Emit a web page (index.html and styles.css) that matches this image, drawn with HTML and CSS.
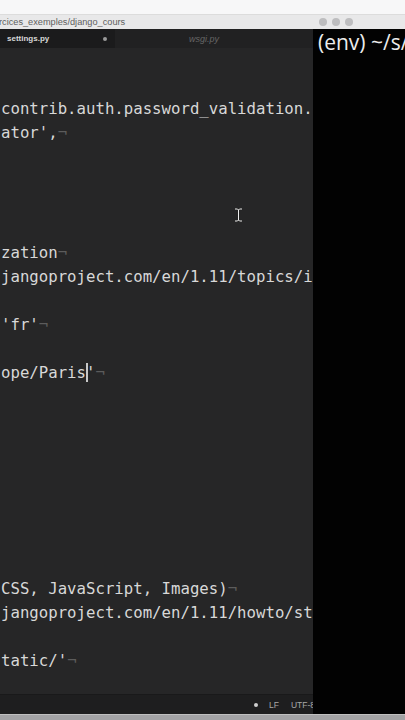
FILE: index.html
```html
<!DOCTYPE html>
<html lang="fr">
<head>
    <meta charset="UTF-8">
    <meta name="viewport" content="width=device-width, initial-scale=1.0">
    <title>settings.py</title>
    <link rel="stylesheet" href="styles.css">
</head>
<body>
    <div class="top-strip"></div>
    <div class="titlebar">
        <div class="path">rcices_exemples/django_cours</div>
        <div class="lights">
            <span></span><span></span><span></span>
        </div>
    </div>
    <div class="window">
        <div class="editor">
            <div class="tabs">
                <div class="tab active">
                    <span class="tab-name">settings.py</span>
                    <span class="modified"></span>
                </div>
                <div class="tab">
                    <span class="tab-name">wsgi.py</span>
                </div>
            </div>
            <div class="code">
                <div class="ln"></div>
                <div class="ln"></div>
                <div class="ln">contrib.auth.password_validation.</div>
                <div class="ln">ator',<span class="eol">¬</span></div>
                <div class="ln"></div>
                <div class="ln"></div>
                <div class="ln"></div>
                <div class="ln"></div>
                <div class="ln">zation<span class="eol">¬</span></div>
                <div class="ln">jangoproject.com/en/1.11/topics/i</div>
                <div class="ln"></div>
                <div class="ln">'fr'<span class="eol">¬</span></div>
                <div class="ln"></div>
                <div class="ln">ope/Paris<span class="cursor"></span>'<span class="eol">¬</span></div>
                <div class="ln"></div>
                <div class="ln"></div>
                <div class="ln"></div>
                <div class="ln"></div>
                <div class="ln"></div>
                <div class="ln"></div>
                <div class="ln"></div>
                <div class="ln"></div>
                <div class="ln">CSS, JavaScript, Images)<span class="eol">¬</span></div>
                <div class="ln">jangoproject.com/en/1.11/howto/st</div>
                <div class="ln"></div>
                <div class="ln">tatic/'<span class="eol">¬</span></div>
                <div class="ln"></div>
                <svg class="ibeam" width="9" height="14" viewBox="0 0 9 14">
                    <path d="M1 1h2.5l1 1 1-1H8M4.5 2v10M1 13h2.5l1-1 1 1H8" fill="none" stroke="#222" stroke-width="2.4"/>
                    <path d="M1 1h2.5l1 1 1-1H8M4.5 2v10M1 13h2.5l1-1 1 1H8" fill="none" stroke="#eee" stroke-width="1"/>
                </svg>
            </div>
            <div class="statusbar">
                <span class="status-dot"></span>
                <span class="status-eol">LF</span>
                <span class="status-enc">UTF-8</span>
            </div>
        </div>
        <div class="terminal">
            <div class="prompt">(env) ~/s/</div>
        </div>
    </div>
    <div class="bottom-strip"></div>
</body>
</html>
```

FILE: styles.css
```css
body {
    margin: 0;
    padding: 0;
    width: 405px;
    height: 720px;
    overflow: hidden;
    background-color: #000;
    font-family: "Liberation Sans", Arial, sans-serif;
    display: flex;
    flex-direction: column;
}
.top-strip {
    height: 14px;
    background-color: #f7f7f8;
}
.titlebar {
    height: 16px;
    background-color: #e8e8e9;
    border-top: 1px solid #dcdcdc;
    box-sizing: border-box;
    display: flex;
    align-items: center;
    justify-content: space-between;
}
.titlebar .path {
    font-size: 9.2px;
    color: #5f5f5f;
    white-space: nowrap;
    margin-left: -1px;
}
.lights {
    display: flex;
    gap: 5px;
    margin-right: 52px;
}
.lights span {
    width: 8px;
    height: 8px;
    border-radius: 50%;
    background-color: #bdbdbf;
}
.window {
    display: flex;
    height: 685px;
}
.editor {
    flex: 0 0 313px;
    background-color: #262627;
    display: flex;
    flex-direction: column;
    overflow: hidden;
}
.tabs {
    height: 19px;
    flex-shrink: 0;
    display: flex;
    background-color: #1c1c1d;
}
.tab {
    display: flex;
    align-items: center;
    font-size: 9px;
    color: #666;
    font-style: italic;
    flex: 1;
    justify-content: center;
    padding-right: 20px;
    background-color: #212122;
}
.tab.active {
    flex: 0 0 115px;
    justify-content: space-between;
    padding: 0 8px 0 7px;
    box-sizing: border-box;
    font-size: 8px;
    font-style: normal;
    font-weight: bold;
    color: #d8d8d8;
    background-color: #1b1b1c;
}
.modified {
    width: 4px;
    height: 4px;
    border-radius: 50%;
    background-color: #9a9a9a;
}
.code {
    flex: 1;
    min-height: 0;
    overflow: hidden;
    position: relative;
    padding-top: 1px;
    font-family: "DejaVu Sans Mono", "Liberation Mono", monospace;
    font-size: 15.7px;
    color: #d8d8d8;
    padding-left: 1px;
}
.ln {
    height: 24px;
    line-height: 24px;
    white-space: pre;
}
.eol {
    color: #5c5c5c;
}
.cursor {
    display: inline-block;
    width: 1.5px;
    height: 19px;
    margin-right: -1.5px;
    vertical-align: -4px;
    background-color: #c8c8c8;
}
.ibeam {
    position: absolute;
    left: 234px;
    top: 160px;
}
.statusbar {
    height: 19px;
    flex-shrink: 0;
    background-color: #1e1e1f;
    border-top: 1px solid #19191a;
    display: flex;
    align-items: center;
    padding-left: 254px;
    font-size: 8.5px;
    color: #a8a8a8;
    white-space: nowrap;
}
.statusbar span {
    flex-shrink: 0;
}
.status-dot {
    width: 4px;
    height: 4px;
    border-radius: 50%;
    background-color: #cfcfcf;
}
.status-eol {
    margin-left: 11px;
}
.status-enc {
    margin-left: 12px;
}
.terminal {
    flex: 1;
    min-width: 0;
    overflow: hidden;
    background-color: #020202;
}
.prompt {
    font-family: "Open Sans", sans-serif;
    font-size: 21px;
    color: #ececec;
    white-space: nowrap;
    margin: -1px 0 0 5px;
}
.bottom-strip {
    height: 5px;
    background-color: #a3a3a5;
    border-top: 1px solid #c0c0c0;
}
```
